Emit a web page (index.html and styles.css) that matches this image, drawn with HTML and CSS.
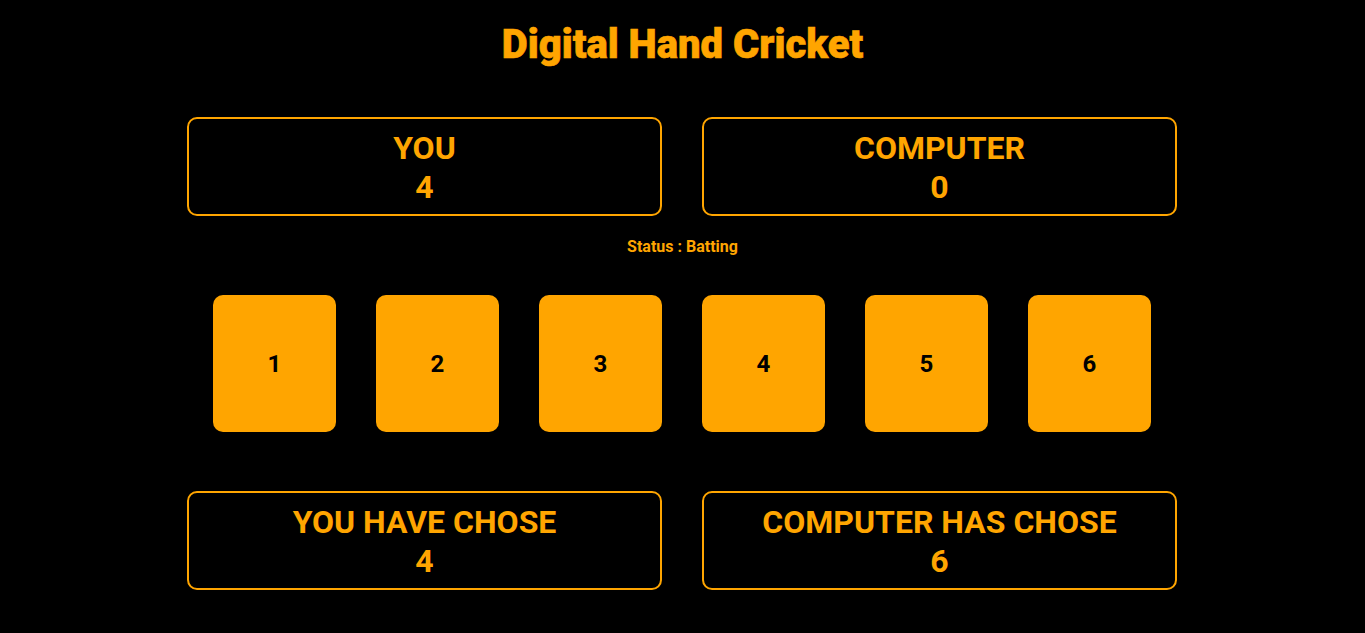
FILE: index.html
```html
<!DOCTYPE html>
<html>
<head>
<meta charset="utf-8">
<link rel="stylesheet" href="styles.css">
</head>
<body>
<h1 class="title">Digital Hand Cricket</h1>
<div class="row">
  <div class="card"><div class="label">YOU</div><div class="value">4</div></div>
  <div class="card"><div class="label">COMPUTER</div><div class="value">0</div></div>
</div>
<p class="status">Status : Batting</p>
<div class="buttons">
  <button class="btn">1</button>
  <button class="btn">2</button>
  <button class="btn">3</button>
  <button class="btn">4</button>
  <button class="btn">5</button>
  <button class="btn">6</button>
</div>
<div class="row bottom">
  <div class="card"><div class="label">YOU HAVE CHOSE</div><div class="value">4</div></div>
  <div class="card"><div class="label">COMPUTER HAS CHOSE</div><div class="value">6</div></div>
</div>
</body>
</html>
```
FILE: styles.css
```css
html, body {
  margin: 0;
  padding: 0;
  background: #000;
  color: #ffa500;
  font-family: Roboto, "Liberation Sans", sans-serif;
}
.title {
  margin: 22px 0 0;
  text-align: center;
  font-size: 40px;
  line-height: 46px;
  font-weight: 900;
  -webkit-text-stroke: 0.6px #ffa500;
}
.row {
  display: flex;
  justify-content: center;
  gap: 40px;
  margin: 49px 1px 0 0;
}
.row.bottom {
  margin-top: 59px;
}
.card {
  box-sizing: border-box;
  width: 475px;
  height: 99px;
  padding-top: 2px;
  border: 2px solid #ffa500;
  border-radius: 10px;
  display: flex;
  flex-direction: column;
  align-items: center;
  justify-content: center;
  font-weight: 700;
  font-size: 32px;
  line-height: 39px;
}
.status {
  margin: 20px 0 0;
  text-align: center;
  font-size: 16px;
  line-height: 22px;
  font-weight: 700;
}
.buttons {
  display: flex;
  justify-content: center;
  gap: 40px;
  margin: 37px 1px 0 0;
}
.btn {
  width: 123px;
  height: 137px;
  border: none;
  border-radius: 10px;
  background: #ffa500;
  color: #000;
  font-family: Roboto, "Liberation Sans", sans-serif;
  font-weight: 700;
  font-size: 24px;
  padding: 0;
}
```
